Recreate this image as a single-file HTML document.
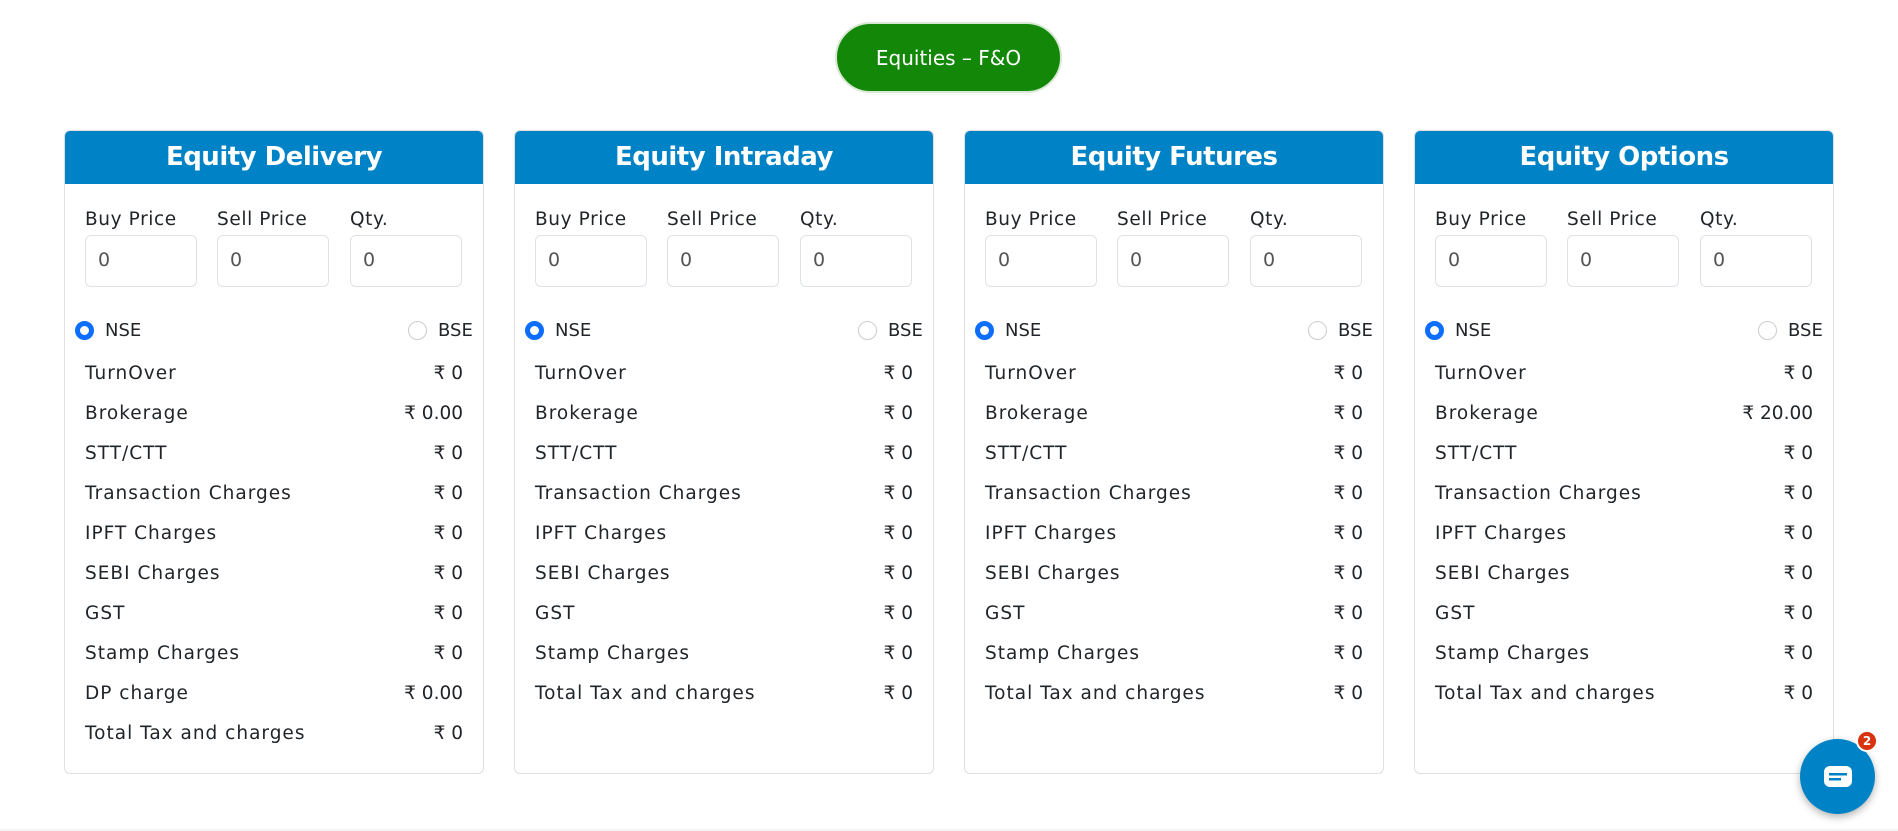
<!DOCTYPE html>
<html><head><meta charset="utf-8"><style>
*{box-sizing:border-box;margin:0;padding:0}
body{width:1898px;height:831px;background:#fff;font-family:"DejaVu Sans","Liberation Sans",sans-serif;color:#212529;position:relative;overflow:hidden}
.btn{position:absolute;left:835px;top:22px;width:227px;height:71px;border-radius:36px;background:#138808;border:2px solid #d8e8d4;color:#fff;font-size:20px;display:flex;align-items:center;justify-content:center}
.card{position:absolute;top:130px;width:420px;height:644px;border:1px solid #dcdfe3;border-radius:6px;overflow:hidden}
.hd{height:53px;background:#0083c6;color:#fff;font-weight:bold;font-size:26px;text-align:center;line-height:53px;letter-spacing:-0.5px}
.t{position:absolute;top:78px;font-size:18.5px;letter-spacing:0.6px}
.in{position:absolute;top:104px;width:112px;height:52px;border:1px solid #dee2e6;border-radius:6px;font-size:19px;color:#555;padding:13px 0 0 12px}
.rad{position:absolute;top:190px;width:19px;height:19px;border-radius:50%}
.row{position:absolute;left:20px;right:20px;font-size:18.5px;display:flex;justify-content:space-between;line-height:24px}
.row span:first-child{letter-spacing:1px}
.chat{position:absolute;left:1800px;top:739px;width:75px;height:75px;border-radius:50%;background:#0083c6;box-shadow:0 3px 8px rgba(0,0,0,.3)}
.badge{position:absolute;left:1856px;top:730px;width:22px;height:22px;border-radius:50%;background:#d9320e;border:2px solid #fff;color:#fff;font-size:12px;font-weight:bold;text-align:center;line-height:18px}
.foot{position:absolute;left:0;top:829px;width:1898px;height:2px;background:#f3f4f6}
</style></head><body>
<div class="btn">Equities – F&amp;O</div>

<div class="card" style="left:64px">
<div class="hd">Equity Delivery</div>
<div class="t" style="left:20px">Buy Price</div><div class="t" style="left:152px">Sell Price</div><div class="t" style="left:285px">Qty.</div>
<div class="in" style="left:20px">0</div><div class="in" style="left:152px">0</div><div class="in" style="left:285px">0</div>
<div class="rad" style="left:10px;border:5px solid #0d6efd"></div><div style="position:absolute;left:40px;top:189px;font-size:18px">NSE</div>
<div class="rad" style="left:343px;border:1px solid #ccc"></div><div style="position:absolute;left:373px;top:189px;font-size:18px">BSE</div>
<div class="row" style="top:231px"><span>TurnOver</span><span>₹ 0</span></div>
<div class="row" style="top:271px"><span>Brokerage</span><span>₹ 0.00</span></div>
<div class="row" style="top:311px"><span>STT/CTT</span><span>₹ 0</span></div>
<div class="row" style="top:351px"><span>Transaction Charges</span><span>₹ 0</span></div>
<div class="row" style="top:391px"><span>IPFT Charges</span><span>₹ 0</span></div>
<div class="row" style="top:431px"><span>SEBI Charges</span><span>₹ 0</span></div>
<div class="row" style="top:471px"><span>GST</span><span>₹ 0</span></div>
<div class="row" style="top:511px"><span>Stamp Charges</span><span>₹ 0</span></div>
<div class="row" style="top:551px"><span>DP charge</span><span>₹ 0.00</span></div>
<div class="row" style="top:591px"><span>Total Tax and charges</span><span>₹ 0</span></div>
</div>

<div class="card" style="left:514px">
<div class="hd">Equity Intraday</div>
<div class="t" style="left:20px">Buy Price</div><div class="t" style="left:152px">Sell Price</div><div class="t" style="left:285px">Qty.</div>
<div class="in" style="left:20px">0</div><div class="in" style="left:152px">0</div><div class="in" style="left:285px">0</div>
<div class="rad" style="left:10px;border:5px solid #0d6efd"></div><div style="position:absolute;left:40px;top:189px;font-size:18px">NSE</div>
<div class="rad" style="left:343px;border:1px solid #ccc"></div><div style="position:absolute;left:373px;top:189px;font-size:18px">BSE</div>
<div class="row" style="top:231px"><span>TurnOver</span><span>₹ 0</span></div>
<div class="row" style="top:271px"><span>Brokerage</span><span>₹ 0</span></div>
<div class="row" style="top:311px"><span>STT/CTT</span><span>₹ 0</span></div>
<div class="row" style="top:351px"><span>Transaction Charges</span><span>₹ 0</span></div>
<div class="row" style="top:391px"><span>IPFT Charges</span><span>₹ 0</span></div>
<div class="row" style="top:431px"><span>SEBI Charges</span><span>₹ 0</span></div>
<div class="row" style="top:471px"><span>GST</span><span>₹ 0</span></div>
<div class="row" style="top:511px"><span>Stamp Charges</span><span>₹ 0</span></div>
<div class="row" style="top:551px"><span>Total Tax and charges</span><span>₹ 0</span></div>
</div>

<div class="card" style="left:964px">
<div class="hd">Equity Futures</div>
<div class="t" style="left:20px">Buy Price</div><div class="t" style="left:152px">Sell Price</div><div class="t" style="left:285px">Qty.</div>
<div class="in" style="left:20px">0</div><div class="in" style="left:152px">0</div><div class="in" style="left:285px">0</div>
<div class="rad" style="left:10px;border:5px solid #0d6efd"></div><div style="position:absolute;left:40px;top:189px;font-size:18px">NSE</div>
<div class="rad" style="left:343px;border:1px solid #ccc"></div><div style="position:absolute;left:373px;top:189px;font-size:18px">BSE</div>
<div class="row" style="top:231px"><span>TurnOver</span><span>₹ 0</span></div>
<div class="row" style="top:271px"><span>Brokerage</span><span>₹ 0</span></div>
<div class="row" style="top:311px"><span>STT/CTT</span><span>₹ 0</span></div>
<div class="row" style="top:351px"><span>Transaction Charges</span><span>₹ 0</span></div>
<div class="row" style="top:391px"><span>IPFT Charges</span><span>₹ 0</span></div>
<div class="row" style="top:431px"><span>SEBI Charges</span><span>₹ 0</span></div>
<div class="row" style="top:471px"><span>GST</span><span>₹ 0</span></div>
<div class="row" style="top:511px"><span>Stamp Charges</span><span>₹ 0</span></div>
<div class="row" style="top:551px"><span>Total Tax and charges</span><span>₹ 0</span></div>
</div>

<div class="card" style="left:1414px">
<div class="hd">Equity Options</div>
<div class="t" style="left:20px">Buy Price</div><div class="t" style="left:152px">Sell Price</div><div class="t" style="left:285px">Qty.</div>
<div class="in" style="left:20px">0</div><div class="in" style="left:152px">0</div><div class="in" style="left:285px">0</div>
<div class="rad" style="left:10px;border:5px solid #0d6efd"></div><div style="position:absolute;left:40px;top:189px;font-size:18px">NSE</div>
<div class="rad" style="left:343px;border:1px solid #ccc"></div><div style="position:absolute;left:373px;top:189px;font-size:18px">BSE</div>
<div class="row" style="top:231px"><span>TurnOver</span><span>₹ 0</span></div>
<div class="row" style="top:271px"><span>Brokerage</span><span>₹ 20.00</span></div>
<div class="row" style="top:311px"><span>STT/CTT</span><span>₹ 0</span></div>
<div class="row" style="top:351px"><span>Transaction Charges</span><span>₹ 0</span></div>
<div class="row" style="top:391px"><span>IPFT Charges</span><span>₹ 0</span></div>
<div class="row" style="top:431px"><span>SEBI Charges</span><span>₹ 0</span></div>
<div class="row" style="top:471px"><span>GST</span><span>₹ 0</span></div>
<div class="row" style="top:511px"><span>Stamp Charges</span><span>₹ 0</span></div>
<div class="row" style="top:551px"><span>Total Tax and charges</span><span>₹ 0</span></div>
</div>

<div class="chat"><svg width="75" height="75" viewBox="0 0 75 75"><rect x="24" y="27" width="28" height="21" rx="6" fill="#fff"/><rect x="29" y="34" width="18" height="2.5" fill="#0083c6"/><rect x="29" y="39" width="12" height="2.5" fill="#0083c6"/></svg></div>
<div class="badge">2</div>
<div class="foot"></div>
</body></html>
